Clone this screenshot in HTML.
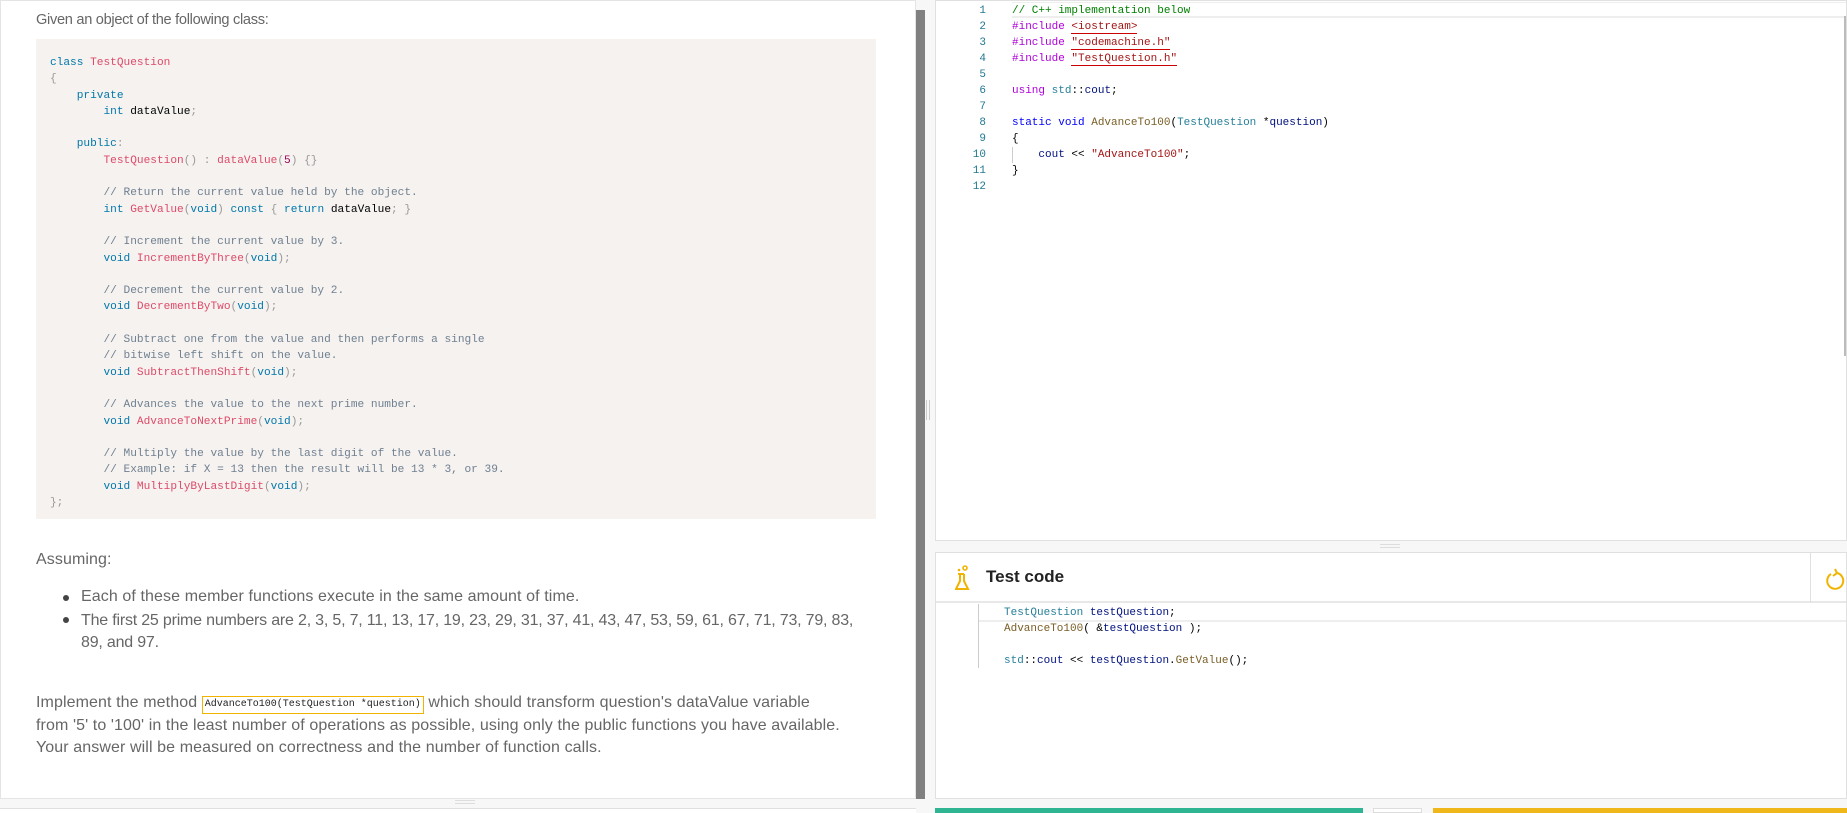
<!DOCTYPE html>
<html><head><meta charset="utf-8"><style>
*{margin:0;padding:0;box-sizing:border-box}
body{width:1847px;height:813px;background:#f7f7f7;position:relative;overflow:hidden;font-family:"Liberation Sans",sans-serif}
.abs{position:absolute}
#left{left:0;top:0;width:916px;height:799px;background:#fff;border:1px solid #e4e4e4}
.txt{color:#666;font-size:16px;letter-spacing:0.1px;white-space:nowrap}
#code{left:36px;top:39px;width:840px;height:480px;background:#f5f2f0}
.mono{font-family:"Liberation Mono",monospace;white-space:pre}
#code .mono{position:absolute;left:14px;top:16px;font-size:11.15px;line-height:16.3px;color:#000}
.k{color:#07a}.f{color:#dd4a68}.c{color:#708090}.p{color:#999}.n{color:#905}
#sb{left:916px;top:10px;width:9px;height:789px;background:#808080}
#ed{left:935px;top:0;width:912px;height:541px;background:#fff;border:1px solid #e0e0e0}
#ed .ln{position:absolute;left:0;width:50px;text-align:right;font-family:"Liberation Mono",monospace;font-size:11px;line-height:16px;color:#237893}
#ed .src{position:absolute;left:76px;top:2px;font-size:11px;line-height:16px}
.g{color:#008000}.pu{color:#af00db}.r{color:#a31515;border-bottom:1.5px solid #c00}.rs{color:#a31515}.b{color:#0000ff}.y{color:#795e26}.t{color:#267f99}.v{color:#001080}
#tp{left:935px;top:552px;width:912px;height:247px;background:#fff;border:1px solid #e0e0e0}
</style></head><body>
<div id="left" class="abs"></div>
<div class="abs txt" style="left:36px;top:12px;font-size:14.6px;letter-spacing:-0.3px">Given an object of the following class:</div>
<div id="code" class="abs"><div class="mono"><span class="k">class</span> <span class="f">TestQuestion</span>
<span class="p">{</span>
    <span class="k">private</span>
        <span class="k">int</span> dataValue<span class="p">;</span>

    <span class="k">public</span><span class="p">:</span>
        <span class="f">TestQuestion</span><span class="p">()</span> <span class="p">:</span> <span class="f">dataValue</span><span class="p">(</span><span class="n">5</span><span class="p">)</span> <span class="p">{}</span>

        <span class="c">// Return the current value held by the object.</span>
        <span class="k">int</span> <span class="f">GetValue</span><span class="p">(</span><span class="k">void</span><span class="p">)</span> <span class="k">const</span> <span class="p">{</span> <span class="k">return</span> dataValue<span class="p">;</span> <span class="p">}</span>

        <span class="c">// Increment the current value by 3.</span>
        <span class="k">void</span> <span class="f">IncrementByThree</span><span class="p">(</span><span class="k">void</span><span class="p">);</span>

        <span class="c">// Decrement the current value by 2.</span>
        <span class="k">void</span> <span class="f">DecrementByTwo</span><span class="p">(</span><span class="k">void</span><span class="p">);</span>

        <span class="c">// Subtract one from the value and then performs a single</span>
        <span class="c">// bitwise left shift on the value.</span>
        <span class="k">void</span> <span class="f">SubtractThenShift</span><span class="p">(</span><span class="k">void</span><span class="p">);</span>

        <span class="c">// Advances the value to the next prime number.</span>
        <span class="k">void</span> <span class="f">AdvanceToNextPrime</span><span class="p">(</span><span class="k">void</span><span class="p">);</span>

        <span class="c">// Multiply the value by the last digit of the value.</span>
        <span class="c">// Example: if X = 13 then the result will be 13 * 3, or 39.</span>
        <span class="k">void</span> <span class="f">MultiplyByLastDigit</span><span class="p">(</span><span class="k">void</span><span class="p">);</span>
<span class="p">};</span></div></div>
<div class="abs txt" style="left:36px;top:551px">Assuming:</div>
<div class="abs" style="left:63px;top:595px;width:6px;height:6px;border-radius:50%;background:#444"></div>
<div class="abs" style="left:63px;top:617px;width:6px;height:6px;border-radius:50%;background:#444"></div>
<div class="abs txt" style="left:81px;top:588px">Each of these member functions execute in the same amount of time.</div>
<div class="abs txt" style="left:81px;top:610px;line-height:22px;letter-spacing:-0.2px">The first 25 prime numbers are 2, 3, 5, 7, 11, 13, 17, 19, 23, 29, 31, 37, 41, 43, 47, 53, 59, 61, 67, 71, 73, 79, 83,<br>89, and 97.</div>
<div class="abs txt" style="left:36px;top:692px;line-height:22.5px">Implement the method <span class="mono" style="display:inline-block;font-size:10px;letter-spacing:0;color:#222;border:1px solid #f0b400;padding:0 2px;line-height:16px;vertical-align:1px">AdvanceTo100(TestQuestion *question)</span> which should transform question's dataValue variable<br>from '5' to '100' in the least number of operations as possible, using only the public functions you have available.<br>Your answer will be measured on correctness and the number of function calls.</div>
<div id="sb" class="abs"></div>
<div class="abs" style="left:455px;top:800px;width:20px;height:1px;background:#ddd"></div>
<div class="abs" style="left:455px;top:803px;width:20px;height:1px;background:#ddd"></div>
<div class="abs" style="left:0;top:808px;width:916px;height:5px;background:#fff;border-top:1px solid #e0e0e0"></div>

<div id="ed" class="abs">
<div class="abs" style="left:76px;top:1px;right:0;height:16px;border-top:1px solid #eee;border-bottom:2px solid #eee"></div>
<div class="ln" style="top:2px">1<br>2<br>3<br>4<br>5<br>6<br>7<br>8<br>9<br>10<br>11<br>12</div>
<div class="src mono"><span class="g">// C++ implementation below</span>
<span class="pu">#include</span> <span class="r">&lt;iostream&gt;</span>
<span class="pu">#include</span> <span class="r">"codemachine.h"</span>
<span class="pu">#include</span> <span class="r">"TestQuestion.h"</span>

<span class="pu">using</span> <span class="t">std</span>::<span class="v">cout</span>;

<span class="b">static</span> <span class="b">void</span> <span class="y">AdvanceTo100</span>(<span class="t">TestQuestion</span> *<span class="v">question</span>)
{
    <span class="v">cout</span> &lt;&lt; <span class="rs">"AdvanceTo100"</span>;
}
</div>
<div class="abs" style="left:76px;top:146px;width:1px;height:16px;background:#ccc"></div>
<div class="abs" style="right:0;top:15px;width:2px;height:340px;background:#bbb"></div>
</div>
<div class="abs" style="left:926px;top:400px;width:1px;height:20px;background:#ccc"></div>
<div class="abs" style="left:929px;top:400px;width:1px;height:20px;background:#ccc"></div>
<div class="abs" style="left:1380px;top:544px;width:20px;height:1px;background:#ddd"></div>
<div class="abs" style="left:1380px;top:547px;width:20px;height:1px;background:#ddd"></div>

<div id="tp" class="abs">
<div class="abs" style="left:0;top:0;right:0;height:50px;border-bottom:2px solid #e8e8e8"></div>
<div class="abs" style="left:874px;top:0;width:1px;height:50px;background:#e0e0e0"></div>
<svg class="abs" style="left:19px;top:12px" width="16" height="26" viewBox="0 0 16 26"><circle cx="10" cy="3" r="2" fill="none" stroke="#f0b400" stroke-width="1.6"/><circle cx="4" cy="5" r="1.3" fill="#f0b400"/><path d="M3 9H9M5 9V16L1 24H13L9 16V9" fill="none" stroke="#f0b400" stroke-width="2"/></svg>
<div class="abs" style="left:50px;top:14px;font-size:17px;font-weight:bold;color:#222">Test code</div>
<svg class="abs" style="left:888px;top:13px" width="22" height="26" viewBox="0 0 22 26"><path d="M7 8A8 8 0 1 0 13 7M11 3L13 7L9 10" fill="none" stroke="#f0b400" stroke-width="2"/></svg>
<div class="abs" style="left:42px;top:51px;width:1px;height:64px;background:#ccc"></div>
<div class="abs" style="left:43px;top:67px;right:0;height:2px;background:#eee"></div>
<div class="abs mono" style="left:68px;top:52px;font-size:11px;line-height:16px"><span class="t">TestQuestion</span> <span class="v">testQuestion</span>;
<span class="y">AdvanceTo100</span>( &amp;<span class="v">testQuestion</span> );

<span class="t">std</span>::<span class="v">cout</span> &lt;&lt; <span class="v">testQuestion</span>.<span class="y">GetValue</span>();</div>
</div>
<div class="abs" style="left:935px;top:808px;width:428px;height:5px;background:#2fb592"></div>
<div class="abs" style="left:1373px;top:808px;width:49px;height:5px;background:#fff;border:1px solid #ddd"></div>
<div class="abs" style="left:1433px;top:808px;width:414px;height:5px;background:#f0b71a"></div>
</body></html>
